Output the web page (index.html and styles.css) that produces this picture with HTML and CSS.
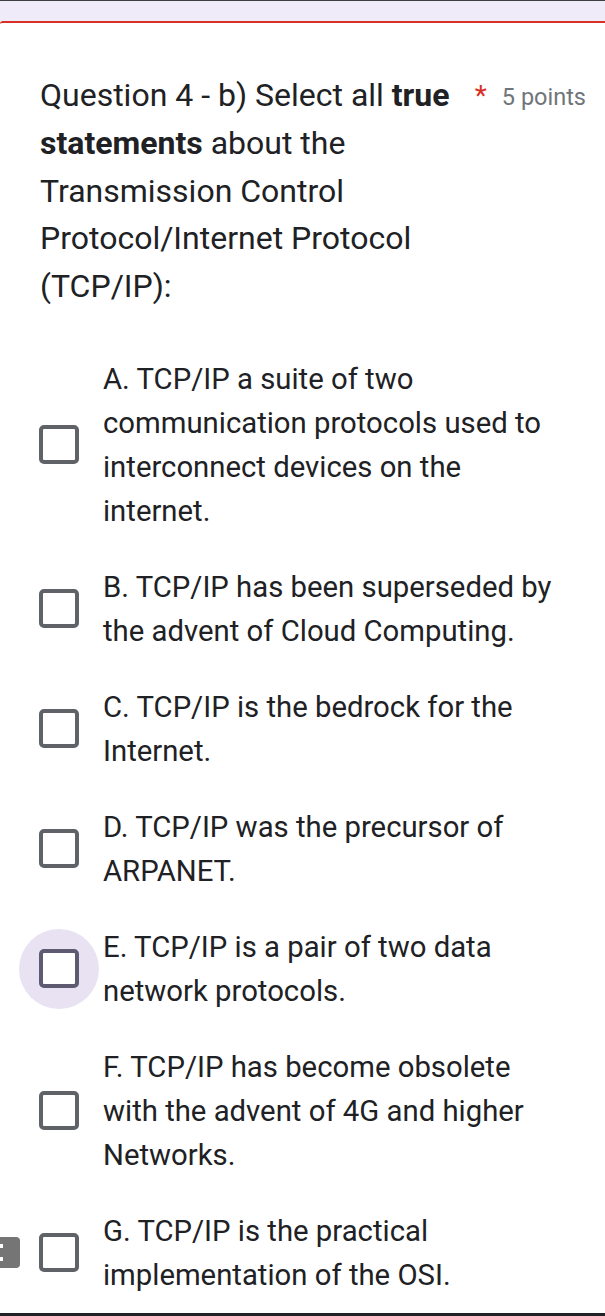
FILE: index.html
```html
<!DOCTYPE html>
<html lang="en">
<head>
<meta charset="utf-8">
<title>Question 4</title>
<link rel="stylesheet" href="styles.css">
</head>
<body>
<div class="page">
  <div class="topband"></div>
  <div class="card">
    <div class="header">
      <div class="title">Question 4 - b) Select all <b>true</b> <b>statements</b> about the Transmission Control Protocol/Internet Protocol (TCP/IP):</div>
      <div class="meta"><span class="req">*</span><span class="points">5 points</span></div>
    </div>
    <div class="options">
      <div class="option">
        <div class="box-wrap"><span class="box"></span></div>
        <div class="label">A. TCP/IP a suite of two communication protocols used to interconnect devices on the internet.</div>
      </div>
      <div class="option">
        <div class="box-wrap"><span class="box"></span></div>
        <div class="label">B. TCP/IP has been superseded by the advent of Cloud Computing.</div>
      </div>
      <div class="option">
        <div class="box-wrap"><span class="box"></span></div>
        <div class="label">C. TCP/IP is the bedrock for the Internet.</div>
      </div>
      <div class="option">
        <div class="box-wrap"><span class="box"></span></div>
        <div class="label">D. TCP/IP was the precursor of ARPANET.</div>
      </div>
      <div class="option">
        <div class="box-wrap focused"><span class="box"></span></div>
        <div class="label">E. TCP/IP is a pair of two data network protocols.</div>
      </div>
      <div class="option">
        <div class="box-wrap"><span class="box"></span></div>
        <div class="label">F. TCP/IP has become obsolete with the advent of 4G and higher Networks.</div>
      </div>
      <div class="option">
        <div class="box-wrap"><span class="box"></span></div>
        <div class="label">G. TCP/IP is the practical implementation of the OSI.</div>
        <span class="side-tab"><i></i><i></i></span>
      </div>
    </div>
  </div>
  <div class="bottombar"></div>
</div>
</body>
</html>
```

FILE: styles.css
```css
html, body {
  margin: 0;
  padding: 0;
  background: #ffffff;
}
body {
  font-family: Roboto, "Noto Sans", Arial, sans-serif;
  color: #202124;
  overflow: hidden;
}
.page {
  width: 605px;
  height: 1316px;
  display: flex;
  flex-direction: column;
}
.topband {
  height: 20px;
  border-top: 1px solid #3c4043;
  background: #efebf8;
  flex: none;
}
.card {
  flex: 1;
  border-top: 2px solid #d93025;
  border-top-left-radius: 3px;
  background: #fff;
  padding: 49px 0 0 0;
}
.header {
  display: flex;
  align-items: flex-start;
  padding-left: 40px;
  padding-right: 19px;
}
.title {
  flex: 1;
  font-size: 32px;
  line-height: 47.75px;
  padding-right: 8px;
}
.title b {
  font-weight: 700;
}
.meta {
  flex: none;
  display: flex;
  align-items: baseline;
  gap: 15px;
  line-height: 47.75px;
}
.req {
  color: #d93025;
  font-size: 28px;
}
.points {
  color: #70757a;
  font-size: 23.5px;
}
.options {
  margin-top: 46px;
  display: flex;
  flex-direction: column;
  gap: 32px;
}
.option {
  position: relative;
  display: flex;
  align-items: center;
  padding-left: 19px;
}
.box-wrap {
  flex: none;
  width: 80px;
  height: 80px;
  margin: -20px 4px -20px 0;
  border-radius: 50%;
  display: flex;
  align-items: center;
  justify-content: center;
}
.box-wrap.focused {
  background: #e8e2f3;
}
.box {
  width: 32px;
  height: 31px;
  border: 4px solid #5f6368;
  border-radius: 5px;
  background: #fff;
}
.focused .box {
  border-color: #5e5a72;
}
.label {
  width: 460px;
  font-size: 29.3px;
  line-height: 44px;
}
.side-tab {
  position: absolute;
  left: -10px;
  top: 50%;
  margin-top: -16px;
  width: 30px;
  height: 31px;
  background: #757575;
  border-radius: 4px;
}
.side-tab i {
  position: absolute;
  right: 17px;
  width: 4px;
  height: 4px;
  background: #fff;
}
.side-tab i:first-child { top: 7px; }
.side-tab i:last-child { top: 20px; }
.bottombar {
  height: 3px;
  background: #202428;
  flex: none;
}
```
